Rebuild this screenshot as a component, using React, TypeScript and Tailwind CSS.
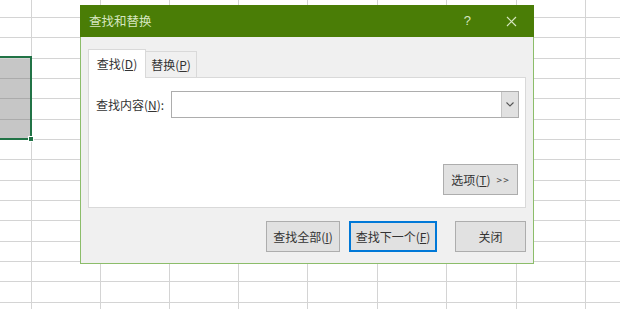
import React from "react"

const rowHeights = [18, 20, 21, 20, 20, 21, 20, 20, 21, 20, 20, 21, 20, 20, 21, 20]
const colWidths = [32, 69, 69, 69, 69, 70, 69, 70, 69, 69]

const cjk = "font-['Microsoft_YaHei','Noto_Sans_CJK_SC',sans-serif]"

function Sheet() {
  return (
    <div className="flex flex-col">
      {rowHeights.map((h, r) => (
        <div key={r} className="flex" style={{ height: h }}>
          {colWidths.map((w, c) => {
            const selected = c === 0 && r >= 3 && r <= 6
            return (
              <div
                key={c}
                style={{ width: w }}
                className={`shrink-0 border-r border-b ${
                  selected ? "bg-[#c6c6c6] border-[#ababab]" : "bg-white border-[#d4d4d4]"
                }`}
              />
            )
          })}
        </div>
      ))}
    </div>
  )
}

function Btn({ children, className = "" }: { children: React.ReactNode; className?: string }) {
  return (
    <button
      className={`h-[31px] flex items-center justify-center bg-[#e1e1e1] text-[12px] text-[#333] ${className}`}
    >
      {children}
    </button>
  )
}

export default function App() {
  return (
    <div className={`relative w-[620px] h-[309px] overflow-hidden bg-white ${cjk}`}>
      <Sheet />

      {/* selection */}
      <div className="absolute left-[-4px] top-[56px] w-[36px] h-[84px] border-2 border-[#217346]" />
      <div className="absolute left-[28px] top-[136px] w-[6px] h-[6px] bg-[#217346] border border-white" />

      {/* dialog */}
      <div className="absolute left-[80px] top-[5px] w-[454px] h-[259px] flex flex-col bg-[#f0f0f0] border border-t-0 border-[#8cbd6a]">
        <div className="h-[32px] -mx-px bg-[#4a7d06] flex items-center pl-[9px] pr-[17px] text-[12.5px] text-[#d6e6c0]">
          <span>查找和替换</span>
          <span className="ml-auto mr-[35px] text-[13px] font-['Liberation_Sans',sans-serif]">?</span>
          <svg width="11" height="11" viewBox="0 0 11 11" className="mt-px">
            <path d="M1 1L10 10M10 1L1 10" stroke="#d6e6c0" strokeWidth="1.2" />
          </svg>
        </div>

        <div className="flex flex-col px-[7px] pt-[12px]">
          <div className="flex items-end h-[28px] text-[12px] text-[#333]">
            <div className="relative z-10 h-[29px] -mb-px w-[58px] bg-white border border-b-0 border-[#d9d9d9] flex items-center justify-center">
              查找(<u>D</u>)
            </div>
            <div className="h-[26px] w-[51px] bg-[#f0f0f0] border border-l-0 border-b-0 border-[#d9d9d9] flex items-center justify-center">
              替换(<u>P</u>)
            </div>
          </div>

          <div className="h-[131px] bg-white border border-[#d9d9d9] flex flex-col pl-[7px] pr-[6px] pt-[13px] pb-[12px]">
            <div className="flex items-center text-[12px] text-[#333]">
              <span className="w-[75px]">查找内容(<u>N</u>):</span>
              <div className="flex-1 h-[27px] border border-[#adadad] flex justify-end">
                <div className="w-[17px] h-full bg-[#e1e1e1] border-l border-[#c5c5c5] flex items-center justify-center">
                  <svg width="8" height="5" viewBox="0 0 8 5">
                    <path d="M0.5 0.5L4 4L7.5 0.5" stroke="#555" strokeWidth="1.1" fill="none" />
                  </svg>
                </div>
              </div>
            </div>
            <div className="mt-auto flex justify-end pr-px">
              <Btn className="w-[75px] border border-[#adadad] gap-[6px]">
                <span>选项(<u>T</u>)</span>
                <span className="text-[10px] tracking-[1px] text-[#444]">&gt;&gt;</span>
              </Btn>
            </div>
          </div>

          <div className="flex justify-end mt-[13px]">
            <Btn className="w-[74px] border border-[#adadad]">查找全部(<u>I</u>)</Btn>
            <Btn className="w-[88px] ml-[9px] border-2 border-[#0078d7]">查找下一个(<u>F</u>)</Btn>
            <Btn className="w-[71px] ml-[18px] border border-[#adadad]">关闭</Btn>
          </div>
        </div>
      </div>
    </div>
  )
}
